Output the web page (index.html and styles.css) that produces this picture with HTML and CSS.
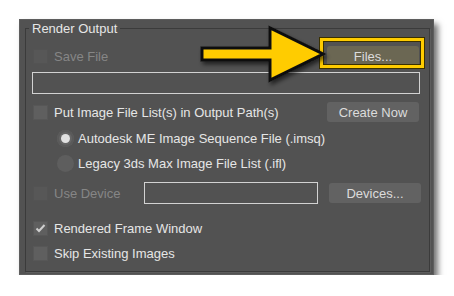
FILE: index.html
```html
<!DOCTYPE html>
<html>
<head>
  <meta charset="UTF-8">
  <title>Render Output</title>
  <link rel="stylesheet" href="styles.css">
</head>
<body>

  <div class="panel">
    <div class="group">
      <div class="title">Render Output</div>

      <div class="row save">
        <span class="check off"></span>
        <span class="label dim">Save File</span>
        <button class="btn files">Files...</button>
      </div>
      <div class="field wide"></div>

      <div class="row list">
        <span class="check"></span>
        <span class="label">Put Image File List(s) in Output Path(s)</span>
        <button class="btn">Create Now</button>
      </div>
      <div class="row radio-row first">
        <span class="radio on"></span>
        <span class="label">Autodesk ME Image Sequence File (.imsq)</span>
      </div>
      <div class="row radio-row">
        <span class="radio"></span>
        <span class="label">Legacy 3ds Max Image File List (.ifl)</span>
      </div>

      <div class="row device">
        <span class="check off"></span>
        <span class="label dim device-label">Use Device</span>
        <div class="field short"></div>
        <button class="btn devices">Devices...</button>
      </div>

      <div class="row frame">
        <span class="check">
          <svg width="15" height="15" viewBox="0 0 15 15">
            <polyline points="3.5,7.5 6,10 11.5,4" fill="none" stroke="#cfcfcf" stroke-width="2"/>
          </svg>
        </span>
        <span class="label">Rendered Frame Window</span>
      </div>
      <div class="row skip">
        <span class="check"></span>
        <span class="label">Skip Existing Images</span>
      </div>
    </div>
  </div>

  <!-- callout drawn over the dialog -->
  <div class="highlight"></div>
  <svg class="arrow" width="454" height="296" viewBox="0 0 454 296">
    <defs>
      <filter id="drop" x="-20%" y="-20%" width="140%" height="150%">
        <feDropShadow dx="2" dy="3" stdDeviation="2" flood-color="#000" flood-opacity="0.6"/>
      </filter>
    </defs>
    <polygon points="202,48 270,48 270,28 323,54 270,80 270,60 202,60"
             fill="#ffcc00" stroke="#111" stroke-width="3" stroke-linejoin="miter" filter="url(#drop)"/>
  </svg>

</body>
</html>
```

FILE: styles.css
```css
* {
  box-sizing: border-box;
}

body {
  margin: 0;
  background: #fff;
  font-family: "Liberation Sans", Arial, sans-serif;
  font-size: 13px;
  color: #e6e6e6;
}

.panel {
  width: 415px;
  height: 256px;
  margin: 19px 0 0 19px;
  background: #525252;
  border: 1px solid #5e5e5e;
  box-shadow: 4px 5px 6px rgba(0, 0, 0, 0.55);
  padding: 8px 3px 0 5px;
}

.group {
  height: 244px;
  border: 1px solid #3b3b3b;
  box-shadow: 1px 1px 0 #5d5d5d;
  padding: 0 9px 0 6px;
}

.title {
  width: fit-content;
  margin: -8px 0 0 -3px;
  padding: 0 3px;
  height: 15px;
  line-height: 15px;
  background: #525252;
}

.row {
  display: flex;
  align-items: center;
  height: 20px;
}

.check {
  width: 15px;
  height: 15px;
  margin-left: 1px;
  background: #5f5f5f;
  border: 1px solid #575757;
  flex: none;
}
.check svg {
  display: block;
  margin: -1px;
}
.check.off {
  background: #575757;
  border-color: #535353;
}

.label {
  margin-left: 6px;
  white-space: nowrap;
}
.dim {
  color: #868686;
}

.btn {
  margin-left: auto;
  width: 92px;
  height: 20px;
  margin-right: 1px;
  border: 0;
  border-radius: 3px;
  background: #626262;
  color: #dcdcdc;
  font-family: inherit;
  font-size: 13px;
  padding: 0;
}

.field {
  border: 1px solid #d2d2d2;
  height: 22px;
}
.field.wide {
  margin-top: 6px;
}
.field.short {
  width: 174px;
}

.save {
  margin-top: 10px;
}
.list {
  margin-top: 8px;
}
.radio-row {
  margin-top: 5px;
}
.radio-row.first {
  margin-top: 6px;
}

.radio {
  width: 17px;
  height: 17px;
  margin-left: 25px;
  border-radius: 50%;
  background: #5e5e5e;
  flex: none;
  display: flex;
  align-items: center;
  justify-content: center;
}
.radio.on {
  background: #666;
  box-shadow: inset 0 0 0 2px #5a5a5a;
}
.radio.on::after {
  content: "";
  width: 9px;
  height: 9px;
  border-radius: 50%;
  background: #e2e2e2;
}
.radio + .label {
  margin-left: 4px;
}

.device {
  height: 22px;
  margin-top: 9px;
}
.device-label {
  width: 90px;
}
.device .devices {
  margin-left: 11px;
  margin-right: -1px;
}

.frame {
  margin-top: 14px;
}
.skip {
  margin-top: 5px;
}

.files {
  background: #6b6753;
}

.highlight {
  position: absolute;
  left: 320px;
  top: 38px;
  width: 104px;
  height: 30px;
  border: 3px solid #ffcc00;
  box-shadow: 0 0 0 1px #3a3000, inset 0 0 0 1px #3a3000;
}

.arrow {
  position: absolute;
  left: 0;
  top: 0;
  pointer-events: none;
}
```
